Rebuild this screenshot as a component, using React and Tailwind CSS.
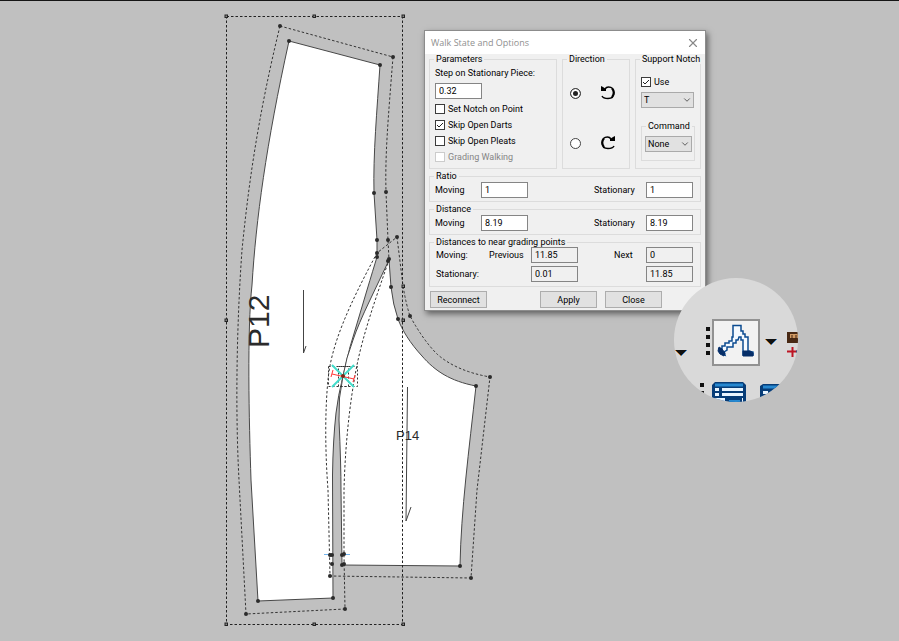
import { X, ChevronDown } from "lucide-react";

const POINTS = [
  [289, 41], [380, 65], [374, 193], [386, 192], [377, 240], [388, 240], [397, 237],
  [377, 253], [377, 257], [389, 259], [388, 261], [391, 287], [398, 319],
  [410, 316], [280, 26], [393, 57], [490, 377], [476, 386], [460, 566], [471, 578],
  [330, 576], [333, 598], [345, 609], [258, 601], [246, 614], [332, 555], [330, 555],
  [342, 555], [344, 554], [332, 564], [342, 565], [344, 564],
];

const HANDLES = [
  [226, 16], [314, 16], [403, 16], [226, 320], [403, 286], [403, 320], [226, 624], [314, 624], [403, 624],
];

function PatternCanvas() {
  return (
    <svg viewBox="0 0 899 641" className="block h-auto w-full" role="img" aria-label="Pattern pieces P12 and P14">
      <rect width="899" height="1" fill="#151515" />
      <g fill="#fff" stroke="#484848" strokeWidth="1">
        <path d="M289 41 L380 65 C377 110 373 155 374 193 L377 240 V257 Q373 270 367 290 L350 347 L343 376 Q338 396 336 413 Q333 440 332.500 475 L333 598 L258 601 L251 480 C249 420 247 330 252 285 C256 220 266 145 289 41Z" />
        <path d="M389 260 L370 300 Q358 325 353 340 Q346 358 343 376 Q338 398 339 420 Q341 465 341 490 L342 565 L460 566 C461 510 469 450 476 386 C450 381 435 371 422 356 C410 343 402 330 398 319 Q393 305 391 287Z" />
      </g>
      <g fill="none" stroke="#333" strokeWidth="1" strokeDasharray="2.500 2">
        <path d="M280 26 L393 57 C388 120 385 155 386 192 L388 240 L389 260 C375 300 363 335 357 365 C349 405 345 450 344 490 V555 L345 609 L246 614 L239 480 C235 405 237 320 242 250 C248 190 257 120 280 26Z" />
        <path d="M397 237 L403 286 Q406 304 410 316 Q423 340 437 354 Q456 371 490 377 L477 490 L471 578 L330 576 L328 490 C325 450 325 410 328 380 C331 345 349 305 377 253Z" />
      </g>
      <rect x="226.500" y="16.500" width="176" height="608" fill="none" stroke="#222" strokeWidth="1" strokeDasharray="2.500 2" />
      <g fill="none" stroke="#444">
        <path d="M303.500 290 V353 L306 346" />
        <path d="M407.500 387 L406 521 L411 507" />
      </g>
      <path d="M324 554.500 H332 M342 554.500 H350" stroke="#72b4ee" />
      {POINTS.map(([x, y]) => (
        <circle key={`${x}-${y}`} cx={x} cy={y} r="2" fill="#2b2b2b" />
      ))}
      {HANDLES.map(([x, y]) => (
        <rect key={`${x}-${y}`} x={x - 1} y={y - 1} width="2.500" height="2.500" fill="#888" stroke="#222" />
      ))}
      <g fill="none">
        <path d="M328.500 366.500 H357.500 V386.500 H328.500Z M338.500 366.500 H348.500 V386.500 H338.500Z" stroke="#333" strokeDasharray="2 2" />
        <path d="M332 365 L354 387 M354 365 L332 387" stroke="#43dccb" strokeWidth="2" />
        <path d="M332 374 L354 379 M333 370 L331 377 M355 375 L353 382" stroke="#ff3535" />
        <circle cx="343" cy="376" r="2" fill="#82200f" />
      </g>
      <g fill="#2b2b2b" fontFamily="Liberation Sans, Arial, sans-serif">
        <text transform="translate(269 348) rotate(-90)" fontSize="30">P12</text>
        <text x="396" y="440" fontSize="13">P14</text>
      </g>
    </svg>
  );
}

function Group({ title, className = "", children }) {
  return (
    <fieldset className={`min-w-0 border border-[#dcdcdc] ${className}`}>
      <legend className="ml-1 h-[10px] px-[2px] leading-[10px] whitespace-nowrap">{title}</legend>
      {children}
    </fieldset>
  );
}

function TextField({ id, label, value, readOnly = false }) {
  return (
    <input
      id={id}
      type="text"
      aria-label={label}
      defaultValue={value}
      readOnly={readOnly}
      className="block h-4 w-[47px] border border-[#858585] bg-white px-[3px] leading-[14px] read-only:bg-[#f0f0f0]"
    />
  );
}

function Check({ label, checked = false, disabled = false }) {
  return (
    <label className="flex h-4 items-center gap-[3px] whitespace-nowrap has-disabled:text-[#858585]">
      <span className="grid size-[10px] shrink-0">
        <input
          type="checkbox"
          defaultChecked={checked}
          disabled={disabled}
          className="peer col-start-1 row-start-1 size-[10px] appearance-none border border-[#3c3c3c] bg-white disabled:border-[#ccc]"
        />
        <svg viewBox="0 0 10 10" className="pointer-events-none invisible col-start-1 row-start-1 size-[10px] peer-checked:visible" fill="none" stroke="#222">
          <path d="M2 5 L4 7 L8 3" />
        </svg>
      </span>
      {label}
    </label>
  );
}

function Radio({ label, checked = false, children }) {
  return (
    <label className="flex h-5 items-center gap-[19px]">
      <input
        type="radio"
        name="direction"
        aria-label={label}
        defaultChecked={checked}
        className="size-[11px] shrink-0 appearance-none rounded-full border border-[#444] bg-white checked:bg-[#222] checked:shadow-[inset_0_0_0_2px_#fff]"
      />
      {children}
    </label>
  );
}

function Dropdown({ label, value, options, className }) {
  return (
    <div className={`grid h-4 items-center ${className}`}>
      <select aria-label={label} defaultValue={value} className="col-start-1 row-start-1 h-4 w-full appearance-none border border-[#aaa] bg-[#e1e1e1] pl-[2px] leading-[14px]">
        {options.map((o) => <option key={o}>{o}</option>)}
      </select>
      <ChevronDown className="pointer-events-none col-start-1 row-start-1 mr-[2px] size-[10px] justify-self-end text-[#444]" strokeWidth={2} />
    </div>
  );
}

function TurnArrow({ className = "" }) {
  return (
    <svg viewBox="0 0 16 16" className={`size-4 ${className}`} fill="none" stroke="#000">
      <path d="M5 4 C6 2.500 7 2 8.500 2 C12 2 14 4.500 14 7.500 C14 11 12 13.500 8 13.500 C5 13.500 3 13 2 11" strokeWidth="1.500" />
      <path d="M12 3.500 C14 6 14 9.500 12 12" strokeWidth="2" />
      <path d="M1 1 L3 2 L6 4 V6 H1Z" fill="#000" stroke="none" />
    </svg>
  );
}

function PairRow({ id, moving, stationary }) {
  return (
    <div className="flex items-center pt-[1px] pr-[7px] pb-[3px] pl-[5px]">
      <label htmlFor={`${id}-moving`} className="w-[46px]">Moving</label>
      <TextField id={`${id}-moving`} value={moving} />
      <label htmlFor={`${id}-stationary`} className="ml-auto w-[52px]">Stationary</label>
      <TextField id={`${id}-stationary`} value={stationary} />
    </div>
  );
}

function DialogButton({ children, className = "" }) {
  return (
    <button type="button" className={`h-[17px] w-[57px] border border-[#adadad] bg-[#e1e1e1] leading-[14px] ${className}`}>
      {children}
    </button>
  );
}

function WalkDialog() {
  return (
    <section
      role="dialog"
      aria-labelledby="walk-title"
      className="absolute top-[30px] left-[424px] w-[282px] border border-[#8c8c8c] bg-[#f0f0f0] font-[Roboto,'Liberation_Sans',Arial,sans-serif] text-[9px] leading-3 text-black shadow-[2px_3px_6px_rgba(0,0,0,0.5)]"
    >
      <header className="flex h-[23px] items-center justify-between bg-white pr-[5px] pl-[6px]">
        <h1 id="walk-title" className="font-['Open_Sans','Noto_Sans',sans-serif] text-[9px] text-[#8f8f8f]">Walk State and Options</h1>
        <button type="button" aria-label="Close dialog" className="text-[#888]"><X className="size-[14px]" strokeWidth={2} /></button>
      </header>
      <form className="flex flex-col gap-[2px] px-1 pb-[2px]">
        <div className="flex gap-[5px]">
          <Group title="Parameters" className="w-32">
            <div className="pb-[3px] pl-[5px]">
              <label htmlFor="step" className="mt-[3px] mb-1 block whitespace-nowrap">Step on Stationary Piece:</label>
              <TextField id="step" value="0.32" />
              <div className="mt-[2px]">
                <Check label="Set Notch on Point" />
                <Check label="Skip Open Darts" checked />
                <Check label="Skip Open Pleats" />
                <Check label="Grading Walking" disabled />
              </div>
            </div>
          </Group>
          <Group title="Direction" className="w-[68px]">
            <div className="flex flex-col gap-[30px] pt-[19px] pl-[7px]">
              <Radio label="Counterclockwise" checked><TurnArrow /></Radio>
              <Radio label="Clockwise"><TurnArrow className="-scale-x-100" /></Radio>
            </div>
          </Group>
          <Group title="Support Notch" className="flex-1">
            <div className="px-[5px]">
              <div className="mt-[10px]">
                <Check label="Use" checked />
                <Dropdown label="Notch type" value="T" options={["T", "V", "I"]} className="mt-[2px] w-[53px]" />
              </div>
              <Group title="Command" className="mt-[13px]">
                <div className="px-[3px] pb-2">
                  <Dropdown label="Command" value="None" options={["None"]} className="mt-[5px] w-[47px]" />
                </div>
              </Group>
            </div>
          </Group>
        </div>
        <Group title="Ratio"><PairRow id="ratio" moving="1" stationary="1" /></Group>
        <Group title="Distance"><PairRow id="distance" moving="8.19" stationary="8.19" /></Group>
        <Group title="Distances to near grading points">
          <div className="grid grid-cols-[53px_42px_47px_1fr_32px_47px] items-center gap-y-[3px] pr-[7px] pb-1 pl-[6px]">
            <span>Moving:</span>
            <label htmlFor="previous">Previous</label>
            <TextField id="previous" value="11.85" readOnly />
            <label htmlFor="next" className="col-start-5">Next</label>
            <TextField id="next" value="0" readOnly />
            <label htmlFor="stationary-previous" className="col-span-2">Stationary:</label>
            <TextField id="stationary-previous" value="0.01" readOnly />
            <div className="col-start-6">
              <TextField id="stationary-next" label="Stationary next" value="11.85" readOnly />
            </div>
          </div>
        </Group>
        <div className="mt-[2px] flex gap-2 pr-[39px] pl-[1px]">
          <DialogButton className="mr-auto">Reconnect</DialogButton>
          <DialogButton>Apply</DialogButton>
          <DialogButton>Close</DialogButton>
        </div>
      </form>
    </section>
  );
}

function ToolbarLens() {
  return (
    <svg viewBox="673 278 125 125" className="absolute top-[278px] left-[673px] size-[125px]" role="img" aria-label="Magnified Walk tool">
      <defs><clipPath id="lens"><circle cx="736" cy="340" r="62" /></clipPath></defs>
      <g clipPath="url(#lens)">
        <rect x="673" y="278" width="125" height="125" fill="#d9d9d9" />
        <g fill="#111">
          <rect x="706" y="327" width="4" height="4" /><rect x="706" y="335" width="4" height="4" />
          <rect x="706" y="343" width="4" height="4" /><rect x="706" y="351" width="4" height="4" />
          <rect x="700" y="383" width="4" height="4" /><rect x="700" y="391" width="4" height="4" />
        </g>
        <rect x="713" y="320" width="46" height="45" fill="#f2f2f2" stroke="#929292" strokeWidth="2" />
        <path d="M733 325.500 H741 V331 H743 V334 H745 V337 H748 V351 L753 352 V355 H743 V340 H741 V337 H739 L738 340 H736 V343 H733 V347 H727 V350 L724 352 L725 355 L721 353 L719 349 H722 V346 H725 V343 H729 V341 H732 V337 H733Z" fill="#f5faff" stroke="#0b4b91" strokeWidth="1.500" />
        <path d="M719 347 L722 349 L725 353 L724 356 L720 354 L718 351Z M743 351 H750 L753 353 V356 H743Z" fill="#062f69" stroke="#062f69" />
        <path d="M675 350 H687 L681 356Z M765 339 H777 L771 345Z" fill="#111" />
        <path d="M675 350 L681 356 M765 339 L771 345" stroke="#c78239" />
        <path d="M687 350 L681 356 M777 339 L771 345" stroke="#397bc0" />
        <rect x="787" y="332" width="14" height="11" fill="#482914" />
        <path d="M790 334 H799 V338 H790Z" fill="#d09a64" />
        <path d="M792 335 V339 M796 335 V339" stroke="#3c2110" />
        <path d="M787 351.500 H800 M792.500 347 V357" stroke="#bd1523" strokeWidth="2" />
        <path d="M796 351.500 H799" stroke="#31558d" strokeWidth="2" />
        <path d="M712 385 L715 382 H743 L746 385 V407 H712Z" fill="#073d78" />
        <path d="M715 385 H743" stroke="#2688d0" strokeWidth="3" />
        <path d="M715 388 H719 V391 H715Z M722 388 H743 V391 H722Z M715 393 H719 V396 H715Z M722 393 H743 V396 H722Z M715 398 H725 V403 H715Z M742 398 H743 V403 H742Z" fill="#e9f5ff" />
        <path d="M729 400 H740 V405 H729Z" fill="#2688d0" />
        <path d="M760 386 L763 384 H790 V404 H760Z" fill="#073d78" />
        <path d="M763 387 H788" stroke="#2688d0" strokeWidth="3" />
        <path d="M763 391 H768 V394 H763Z M763 396 H768 V400 H763Z M774 393 H785 V400 H774Z" fill="#e9f5ff" />
        <path d="M771 391 L775 394 L771 398Z" fill="#bf6e25" />
      </g>
    </svg>
  );
}

export default function App() {
  return (
    <main className="relative min-h-screen overflow-hidden bg-[#c0c0c0]">
      <PatternCanvas />
      <WalkDialog />
      <ToolbarLens />
    </main>
  );
}
